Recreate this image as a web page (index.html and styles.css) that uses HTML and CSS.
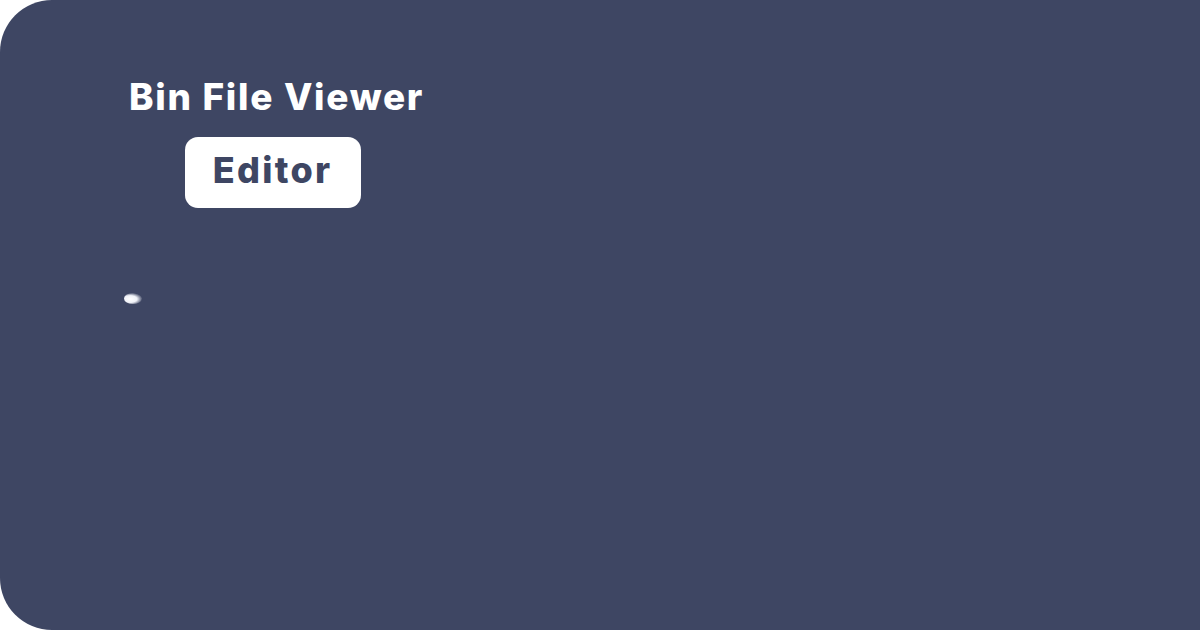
FILE: index.html
```html
<!DOCTYPE html>
<html>
<head>
<meta charset="utf-8">
<link rel="stylesheet" href="styles.css">
</head>
<body>
<div class="card">
  <div class="brand">
    <h1 class="title">Bin File Viewer</h1>
    <div class="pill">Editor</div>
  </div>
  <div class="blob"></div>
</div>
</body>
</html>
```
FILE: styles.css
```css
html, body {
  margin: 0;
  padding: 0;
  background: #ffffff;
}
.card {
  position: relative;
  width: 1200px;
  height: 630px;
  background: #3e4663;
  border-radius: 52px 0 0 52px;
  overflow: hidden;
  font-family: Inter, "Liberation Sans", sans-serif;
}
.brand {
  display: inline-flex;
  flex-direction: column;
  align-items: center;
  margin-left: 129px;
  padding-top: 75px;
}
.title {
  margin: 0;
  font-size: 37px;
  font-weight: 800;
  color: #ffffff;
  letter-spacing: 1.7px;
  line-height: 44px;
}
.pill {
  box-sizing: border-box;
  margin-top: 18px;
  margin-right: 8px;
  width: 176px;
  height: 71px;
  padding-bottom: 5px;
  background: #ffffff;
  border-radius: 13px;
  color: #3e4663;
  font-size: 36px;
  font-weight: 800;
  display: flex;
  align-items: center;
  justify-content: center;
  letter-spacing: 2.3px;
}
.blob {
  position: absolute;
  left: 124px;
  top: 293px;
  width: 18px;
  height: 11px;
  border-radius: 50%;
  background: radial-gradient(ellipse at 35% 55%, #ffffff 0%, #f0f2f8 40%, rgba(255,255,255,0) 75%);
}
```
